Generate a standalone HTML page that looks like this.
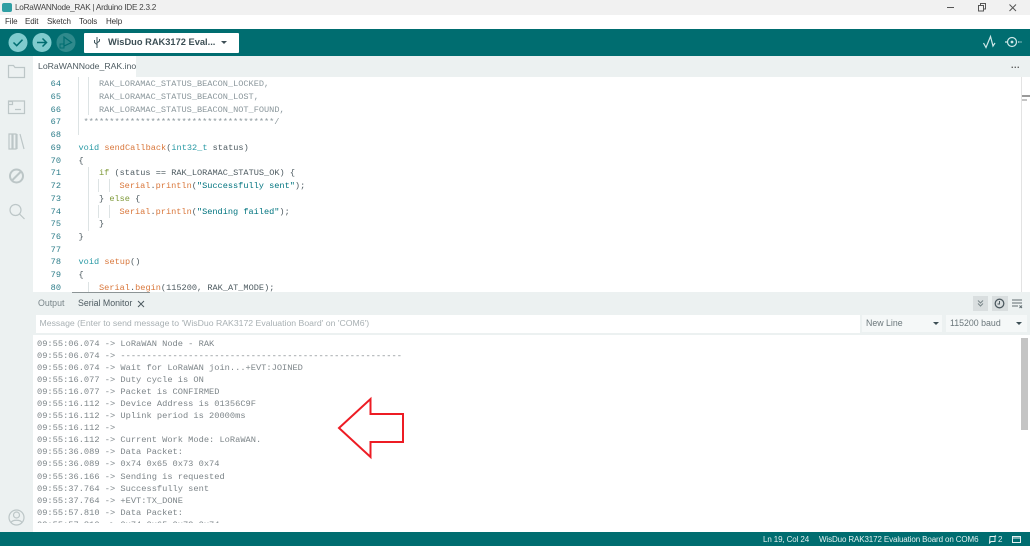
<!DOCTYPE html>
<html><head><meta charset="utf-8"><style>
html,body{margin:0;padding:0;width:1030px;height:547px;overflow:hidden;background:#fff}
*{box-sizing:border-box}
.a{position:absolute;white-space:pre}
#r{position:relative;width:1030px;height:547px;overflow:hidden;font-family:"Liberation Sans",sans-serif;color:#4e5b61;filter:blur(.3px)}
.c{font:8.6px/12.75px "Liberation Mono",monospace;color:#4e5b61;margin-top:.5px}
.n{color:#2d7d8a;width:24px;text-align:right;left:37px}
.g{color:#8b979c}.o{color:#d9773b}.t{color:#2a9aa5}.k{color:#7f9a3a}.s{color:#00747f}
.m{font:8.7px/12px "Liberation Mono",monospace;color:#7d8589;left:37px}
.ig{position:absolute;width:1px;background:#dde3e4}
.mn{font-size:8px;line-height:12px;color:#333;letter-spacing:-.1px;top:16px}
.st{font-size:8px;line-height:13px;color:#e4f0f0;letter-spacing:-.12px;top:533px}
</style></head><body><div id="r">
<div class="a" style="left:0;top:0;width:1030px;height:15px;background:#f1f1f1"></div>
<div class="a" style="left:2px;top:3px;width:10px;height:9px;background:#2f9ea3;border-radius:2px"></div>
<div class="a" style="left:15px;top:2px;font-size:8.2px;letter-spacing:-.26px;line-height:12px;color:#444">LoRaWANNode_RAK | Arduino IDE 2.3.2</div>
<svg class="a" style="left:940px;top:0" width="90" height="15" fill="none" stroke="#555" stroke-width="1"><path d="M7 7.500h7"/><rect x="38.500" y="5.500" width="5" height="5.500"/><path d="M40.500 5.500V3.500h5v5.500h-2"/><path d="M69.500 4.500l6.500 6.500M76 4.500l-6.500 6.500"/></svg>
<div class="a" style="left:0;top:15px;width:1030px;height:14px;background:#fff"></div>
<div class="a mn" style="left:5px">File</div>
<div class="a mn" style="left:25px">Edit</div>
<div class="a mn" style="left:47px">Sketch</div>
<div class="a mn" style="left:79px">Tools</div>
<div class="a mn" style="left:106px">Help</div>

<div class="a" style="left:0;top:29px;width:1030px;height:27px;background:#006d70"></div>
<svg class="a" style="left:0;top:29px" width="90" height="27" fill="none"><circle cx="18" cy="13.500" r="9.500" fill="#7fcbcd"/><path d="M13.500 13.500l3.200 3.200 5.800-6" stroke="#006d70" stroke-width="1.500"/><circle cx="42" cy="13.500" r="9.500" fill="#7fcbcd"/><path d="M37 13.500h9.500M42.500 9.500l4 4-4 4" stroke="#006d70" stroke-width="1.500"/><circle cx="66" cy="13.500" r="9.500" fill="#2f8a8c"/><path d="M64 8l7.500 5.500L64 17z" stroke="#006d70" stroke-width="1.200"/><rect x="60" y="15" width="4" height="4" stroke="#006d70"/></svg>
<div class="a" style="left:84px;top:32.500px;width:155px;height:20px;background:#fff;border-radius:1px"></div>
<svg class="a" style="left:93px;top:36px" width="8" height="13" fill="none" stroke="#40565c"><path d="M4 1v11M1.500 4v2.500L4 8.500M6.500 3v2L4 7"/></svg>
<div class="a" style="left:108px;top:36px;font-size:9.300px;line-height:13px;font-weight:bold;color:#3d4f55">WisDuo RAK3172 Eval...</div>
<div class="a" style="left:221px;top:41px;width:0;height:0;border:3.500px solid transparent;border-top:3.500px solid #3d4f55;border-bottom:0"></div>
<svg class="a" style="left:980px;top:33px" width="50" height="20" fill="none" stroke="#cfe8e8" stroke-width="1.200"><path d="M3.500 10L6 14.500 10.500 3.500 13 13l2-3"/><circle cx="32" cy="9" r="4.500"/><circle cx="32" cy="9" r="0.800" fill="#cfe8e8"/><path d="M25 9h2M38 9h1.500M40.500 9h1"/></svg>

<div class="a" style="left:0;top:56px;width:1030px;height:21px;background:#ecf1f1"></div>
<div class="a" style="left:0;top:56px;width:33px;height:476px;background:#ecf1f1"></div>
<div class="a" style="left:33px;top:56px;width:103px;height:21px;background:#fff"></div>
<div class="a" style="left:38px;top:60px;font-size:8.700px;line-height:13px;color:#4e5b61">LoRaWANNode_RAK.ino</div>
<div class="a" style="left:1011px;top:60px;font-size:9px;line-height:11px;color:#555;font-weight:bold;letter-spacing:.5px">...</div>

<svg class="a" style="left:0;top:56px" width="33" height="476" fill="none" stroke="#bcc6c7" stroke-width="1.200">
<path d="M8.500 11.500v-2h5l1.500 2h9.500v10h-16z"/>
<path d="M8.500 45h16v12.500h-16zM8.500 48.500v-3h4v3h-4zM15 53.500h6"/>
<path d="M9 78v15h3V78zM13 78v15h3V78zM17 78v15M20 78l4 15"/>
<circle cx="16.500" cy="120" r="6.500" stroke-width="2"/><path d="M12 124.500l9-9" stroke-width="2"/>
<circle cx="15.500" cy="154" r="5.500"/><path d="M19.500 158l5 5"/>
<circle cx="16.500" cy="461.500" r="7.500"/><circle cx="16.500" cy="459" r="3"/><path d="M11 466.500c1.500-3 9.500-3 11 0"/>
</svg>

<div class="ig" style="left:78px;top:77px;height:58px"></div>
<div class="ig" style="left:88px;top:77px;height:38px"></div>
<div class="ig" style="left:88px;top:167px;height:64px"></div>
<div class="ig" style="left:98px;top:179px;height:13px"></div>
<div class="ig" style="left:109px;top:179px;height:13px"></div>
<div class="ig" style="left:98px;top:205px;height:13px"></div>
<div class="ig" style="left:109px;top:205px;height:13px"></div>
<div class="ig" style="left:88px;top:282px;height:10px"></div>

<div class="a c n" style="top:77px">64</div><div class="a c g" style="left:99px;top:77px">RAK_LORAMAC_STATUS_BEACON_LOCKED,</div>
<div class="a c n" style="top:90px">65</div><div class="a c g" style="left:99px;top:90px">RAK_LORAMAC_STATUS_BEACON_LOST,</div>
<div class="a c n" style="top:103px">66</div><div class="a c g" style="left:99px;top:103px">RAK_LORAMAC_STATUS_BEACON_NOT_FOUND,</div>
<div class="a c n" style="top:115.500px">67</div><div class="a c g" style="left:83.500px;top:115.500px">*************************************/</div>
<div class="a c n" style="top:128px">68</div>
<div class="a c n" style="top:141px">69</div><div class="a c" style="left:78.500px;top:141px"><span class="t">void</span> <span class="o">sendCallback</span>(<span class="t">int32_t</span> status)</div>
<div class="a c n" style="top:154px">70</div><div class="a c" style="left:78.500px;top:154px">{</div>
<div class="a c n" style="top:166.500px">71</div><div class="a c" style="left:99px;top:166.500px"><span class="k">if</span> (status == RAK_LORAMAC_STATUS_OK) {</div>
<div class="a c n" style="top:179px">72</div><div class="a c" style="left:119.500px;top:179px"><span class="o">Serial</span>.<span class="o">println</span>(<span class="s">"Successfully sent"</span>);</div>
<div class="a c n" style="top:192px">73</div><div class="a c" style="left:99px;top:192px">} <span class="k">else</span> {</div>
<div class="a c n" style="top:205px">74</div><div class="a c" style="left:119.500px;top:205px"><span class="o">Serial</span>.<span class="o">println</span>(<span class="s">"Sending failed"</span>);</div>
<div class="a c n" style="top:217.500px">75</div><div class="a c" style="left:99px;top:217.500px">}</div>
<div class="a c n" style="top:230px">76</div><div class="a c" style="left:78.500px;top:230px">}</div>
<div class="a c n" style="top:243px">77</div>
<div class="a c n" style="top:255.500px">78</div><div class="a c" style="left:78.500px;top:255.500px"><span class="t">void</span> <span class="o">setup</span>()</div>
<div class="a c n" style="top:268px">79</div><div class="a c" style="left:78.500px;top:268px">{</div>
<div class="a c n" style="top:281px">80</div><div class="a c" style="left:99px;top:281px"><span class="o">Serial</span>.<span class="o">begin</span>(115200, RAK_AT_MODE);</div>

<div class="a" style="left:1021px;top:77px;width:1px;height:215px;background:#e3e3e3"></div>
<div class="a" style="left:1022px;top:95px;width:8px;height:2px;background:#9a9a9a"></div>
<div class="a" style="left:1022px;top:99px;width:5px;height:2px;background:#c4c4c4"></div>

<div class="a" style="left:33px;top:292px;width:997px;height:43px;background:#ecf1f1"></div>
<div class="a" style="left:72px;top:292px;width:78px;height:1px;background:#8c9496"></div>
<div class="a" style="left:38px;top:297px;font-size:8.800px;line-height:13px;color:#7a868a">Output</div>
<div class="a" style="left:78px;top:297px;font-size:8.800px;line-height:13px;color:#4e5b61">Serial Monitor</div>
<svg class="a" style="left:137px;top:300px" width="8" height="8" stroke="#4e5b61" fill="none"><path d="M1 1l6 6M7 1l-6 6"/></svg>
<div class="a" style="left:973px;top:296px;width:15px;height:15px;background:#d9dedf"></div>
<div class="a" style="left:992px;top:296px;width:16px;height:15px;background:#d9dedf"></div>
<svg class="a" style="left:973px;top:296px" width="57" height="15" fill="none" stroke="#4e5b61"><path d="M5 4.500l2.500 2.500 2.500-2.500M5 7.500l2.500 2.500 2.500-2.500" stroke="#7a868a"/><circle cx="26.500" cy="7.500" r="4.300" stroke-width="1.300"/><path d="M26.500 5v3h-2"/><path d="M39 4h10M39 7h10M39 10h6M46.500 9.500l2.500 2.500M49 9.500l-2.500 2.500" stroke="#5f6c70"/></svg>
<div class="a" style="left:36px;top:314.500px;width:824px;height:18px;background:#fff"></div>
<div class="a" style="left:39.500px;top:317px;font-size:8.700px;line-height:13px;color:#a8b0b3">Message (Enter to send message to 'WisDuo RAK3172 Evaluation Board' on 'COM6')</div>
<div class="a" style="left:862px;top:315px;width:80px;height:17px;background:#f5f8f8"></div>
<div class="a" style="left:866px;top:317px;font-size:8.800px;line-height:13px;color:#6b777b">New Line</div>
<div class="a" style="left:932.500px;top:322px;width:0;height:0;border:3.500px solid transparent;border-top:3.500px solid #3d4f55;border-bottom:0"></div>
<div class="a" style="left:946px;top:315px;width:81px;height:17px;background:#f5f8f8"></div>
<div class="a" style="left:950px;top:317px;font-size:8.800px;line-height:13px;color:#6b777b">115200 baud</div>
<div class="a" style="left:1016px;top:322px;width:0;height:0;border:3.500px solid transparent;border-top:3.500px solid #3d4f55;border-bottom:0"></div>

<div class="a" style="left:33px;top:335px;width:997px;height:188px;background:#fff;overflow:hidden">
<div style="position:absolute;left:0;top:0;width:997px;height:190px;transform:translate(-33px,-335px)">
<div class="a m" style="top:338px">09:55:06.074 -&gt; LoRaWAN Node - RAK</div>
<div class="a m" style="top:350px">09:55:06.074 -&gt; ------------------------------------------------------</div>
<div class="a m" style="top:362px">09:55:06.074 -&gt; Wait for LoRaWAN join...+EVT:JOINED</div>
<div class="a m" style="top:374px">09:55:16.077 -&gt; Duty cycle is ON</div>
<div class="a m" style="top:386px">09:55:16.077 -&gt; Packet is CONFIRMED</div>
<div class="a m" style="top:398px">09:55:16.112 -&gt; Device Address is 01356C9F</div>
<div class="a m" style="top:410px">09:55:16.112 -&gt; Uplink period is 20000ms</div>
<div class="a m" style="top:422px">09:55:16.112 -&gt; </div>
<div class="a m" style="top:434px">09:55:16.112 -&gt; Current Work Mode: LoRaWAN.</div>
<div class="a m" style="top:446px">09:55:36.089 -&gt; Data Packet:</div>
<div class="a m" style="top:458px">09:55:36.089 -&gt; 0x74 0x65 0x73 0x74</div>
<div class="a m" style="top:471px">09:55:36.166 -&gt; Sending is requested</div>
<div class="a m" style="top:483px">09:55:37.764 -&gt; Successfully sent</div>
<div class="a m" style="top:495px">09:55:37.764 -&gt; +EVT:TX_DONE</div>
<div class="a m" style="top:507px">09:55:57.810 -&gt; Data Packet:</div>
<div class="a m" style="top:519px">09:55:57.810 -&gt; 0x74 0x65 0x73 0x74</div>
</div></div>
<div class="a" style="left:1020.500px;top:338px;width:7px;height:92px;background:#c4c4c4"></div>

<svg class="a" style="left:330px;top:390px" width="85" height="75" fill="none" stroke="#ed1c24" stroke-width="2"><path d="M9 38L40.500 9v15h32.500v28H40.500v15z"/></svg>

<div class="a" style="left:0;top:532px;width:1030px;height:14px;background:#006d70"></div>
<div class="a st" style="left:763px">Ln 19, Col 24</div>
<div class="a st" style="left:819px">WisDuo RAK3172 Evaluation Board on COM6</div>
<svg class="a" style="left:988px;top:533px" width="10" height="13" fill="none" stroke="#e4f0f0"><path d="M2 3.500h5v5H3L1.500 10zM7 2.500l1 1"/></svg>
<div class="a st" style="left:998px">2</div>
<svg class="a" style="left:1011px;top:535px" width="11" height="9" fill="none" stroke="#e4f0f0"><rect x="1.500" y="1.500" width="8" height="6"/><path d="M1.500 3h8"/></svg>
</div></body></html>
